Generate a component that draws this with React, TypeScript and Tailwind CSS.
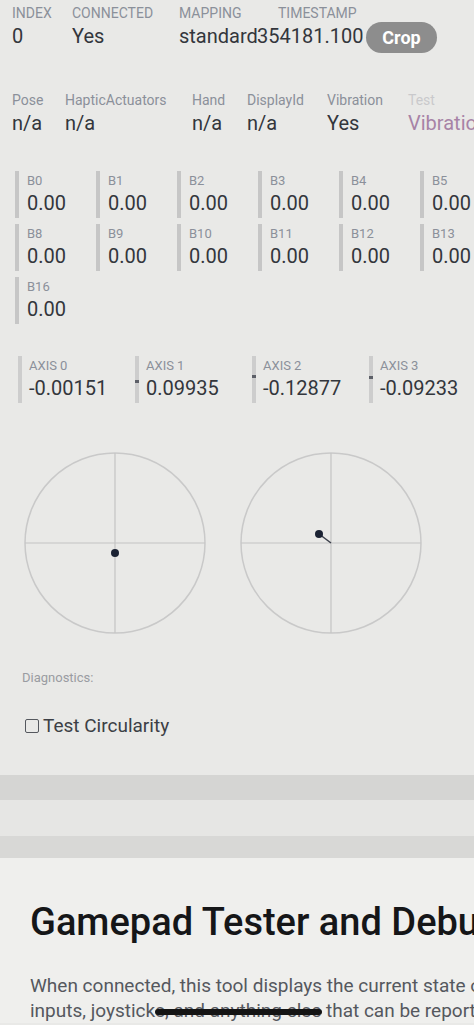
import React from "react";

const font = { fontFamily: "Roboto, 'Liberation Sans', sans-serif" };

type Field = { label: string; value: string; w: number; pad?: number; accent?: boolean; faint?: boolean };

const topRow: Field[] = [
  { label: "INDEX", value: "0", w: 60 },
  { label: "CONNECTED", value: "Yes", w: 107 },
  { label: "MAPPING", value: "standard", w: 78 },
  { label: "TIMESTAMP", value: "354181.100", w: 180, pad: 21 },
];

const infoRow: Field[] = [
  { label: "Pose", value: "n/a", w: 53 },
  { label: "HapticActuators", value: "n/a", w: 127 },
  { label: "Hand", value: "n/a", w: 55 },
  { label: "DisplayId", value: "n/a", w: 80 },
  { label: "Vibration", value: "Yes", w: 81 },
  { label: "Test", value: "Vibration", w: 100, accent: true, faint: true },
];

const buttons = ["B0", "B1", "B2", "B3", "B4", "B5", "B8", "B9", "B10", "B11", "B12", "B13", "B16"];

const axes = [
  { name: "AXIS 0", value: "-0.00151", mark: null },
  { name: "AXIS 1", value: "0.09935", mark: 24 },
  { name: "AXIS 2", value: "-0.12877", mark: 19 },
  { name: "AXIS 3", value: "-0.09233", mark: 20 },
];

function Stick({ dx, dy, line }: { dx: number; dy: number; line?: boolean }) {
  return (
    <svg width="188" height="196" viewBox="0 0 188 196">
      <circle cx="94" cy="98" r="90" fill="none" stroke="#c9c9c9" strokeWidth="1.5" />
      <line x1="4" y1="98" x2="184" y2="98" stroke="#c4c4c4" strokeWidth="1.2" />
      <line x1="94" y1="8" x2="94" y2="188" stroke="#c4c4c4" strokeWidth="1.2" />
      {line && <line x1="94" y1="98" x2={94 + dx} y2={98 + dy} stroke="#3a3f4a" strokeWidth="1.5" />}
      <circle cx={94 + dx} cy={98 + dy} r="4" fill="#1b2233" />
    </svg>
  );
}

export default function App() {
  return (
    <div className="relative w-[474px] h-[1025px] overflow-hidden bg-[#e9e9e7]" style={font}>
      <div className="px-[12px] pt-[3px]">
        {/* top status row */}
        <div className="flex whitespace-nowrap">
          {topRow.map((f) => (
            <div key={f.label} className="flex flex-col shrink-0" style={{ width: f.w }}>
              <span className="text-[14px] leading-[20px] text-[#8b909a]" style={{ paddingLeft: f.pad ?? 0 }}>
                {f.label}
              </span>
              <span className="text-[20px] leading-[26px] text-[#33363c]">{f.value}</span>
            </div>
          ))}
        </div>

        {/* info row */}
        <div className="flex whitespace-nowrap mt-[41px]">
          {infoRow.map((f) => (
            <div key={f.label} className="flex flex-col shrink-0" style={{ width: f.w }}>
              <span className={`text-[14px] leading-[20px] ${f.faint ? "text-[#c9c9cc]" : "text-[#8b909a]"}`}>
                {f.label}
              </span>
              <span className={`text-[20px] leading-[26px] ${f.accent ? "text-[#a783a6]" : "text-[#33363c]"}`}>
                {f.value}
              </span>
            </div>
          ))}
        </div>

        {/* buttons */}
        <div className="grid grid-cols-[repeat(6,81px)] gap-y-[6px] mt-[35px] ml-[3px]">
          {buttons.map((b) => (
            <div key={b} className="flex h-[47px] whitespace-nowrap">
              <div className="w-[4px] h-full bg-[#c6c6c6] shrink-0" />
              <div className="flex flex-col pl-[8px]">
                <span className="text-[13px] leading-[20px] text-[#8b909a]">{b}</span>
                <span className="text-[20px] leading-[24px] text-[#33363c]">0.00</span>
              </div>
            </div>
          ))}
        </div>

        {/* axes */}
        <div className="flex mt-[32px] ml-[6px] whitespace-nowrap">
          {axes.map((a) => (
            <div key={a.name} className="flex w-[117px] h-[47px] shrink-0">
              <div className="relative w-[4px] h-full bg-[#cdcdcd] shrink-0">
                {a.mark !== null && (
                  <div className="absolute left-0 w-[4px] h-[3px] bg-[#5d6068]" style={{ top: a.mark }} />
                )}
              </div>
              <div className="flex flex-col pl-[7px]">
                <span className="text-[13px] leading-[20px] text-[#8b909a]">{a.name}</span>
                <span className="text-[20px] leading-[24px] text-[#33363c]">{a.value}</span>
              </div>
            </div>
          ))}
        </div>

        {/* sticks */}
        <div className="flex gap-[28px] mt-[42px] ml-[9px]">
          <Stick dx={0} dy={10} />
          <Stick dx={-12} dy={-9} line />
        </div>

        <div className="mt-[27px] ml-[10px] text-[13px] text-[#9a9ca2]">Diagnostics:</div>
        <label className="flex items-center mt-[24px] ml-[13px] text-[19px] text-[#3c3f45]">
          <span className="w-[14px] h-[14px] border-[1.5px] border-[#55585e] rounded-[2px] mr-[4px]" />
          Test Circularity
        </label>
      </div>

      {/* page section divider bands */}
      <div className="mt-[35px] h-[25px] bg-[#d5d5d3]" />
      <div className="h-[36px] bg-[#e6e6e4]" />
      <div className="h-[22px] bg-[#d8d8d6]" />

      <div className="bg-[#efefed] pt-[41px] pl-[30px] whitespace-nowrap">
        <h1 className="text-[38px] font-medium leading-[46px] text-[#151618]">Gamepad Tester and Debugger</h1>
        <p className="mt-[28px] text-[19px] leading-[25px] text-[#55585e]">
          When connected, this tool displays the current state of all buttons,
          <br />
          inputs, joysticks, and anything else that can be reported by the device.
        </p>
      </div>

      {/* Crop pill overlay */}
      <div className="absolute left-[366px] top-[22px] w-[71px] h-[31px] rounded-full bg-[#8d8d8d] flex items-center justify-center text-[18px] font-bold text-white">
        Crop
      </div>
      {/* home indicator */}
      <div className="absolute left-[155px] top-[1009px] w-[167px] h-[6px] rounded-full bg-[#141414]" />
    </div>
  );
}
